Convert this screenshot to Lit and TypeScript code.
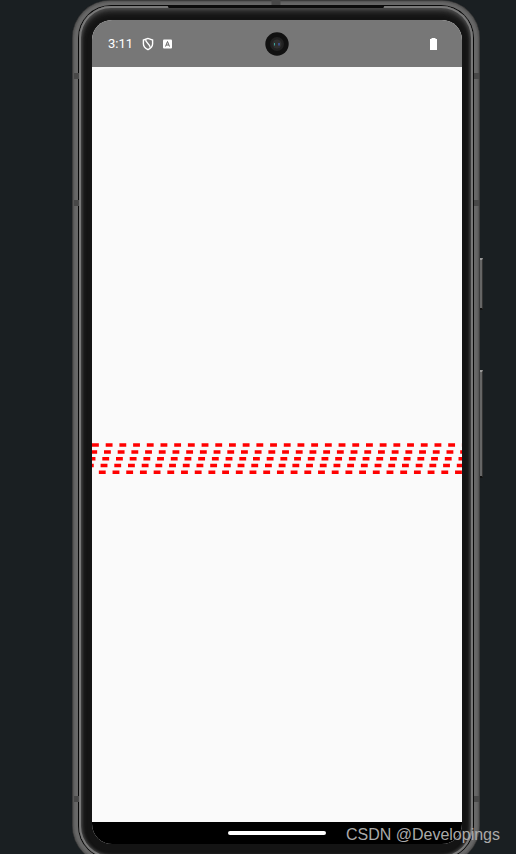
import { LitElement, html, svg, css } from "lit";
import { customElement } from "lit/decorators.js";

const DASH = 6.85;
const ROWS = [
  { y: 2, shift: 0 },
  { y: 9, shift: 1.7 },
  { y: 15.7, shift: 3.4 },
  { y: 22.5, shift: 5.1 },
  { y: 29.2, shift: 6.85 },
];

@customElement("dashed-rows")
class DashedRows extends LitElement {
  static styles = css`
    :host { display: block; }
    svg { display: block; width: 100%; height: 32px; }
    line { stroke: #f00; stroke-width: 3.4; }
  `;
  render() {
    return html`<svg aria-hidden="true">
      ${ROWS.map(r => svg`<line x1="0" x2="100%" y1=${r.y} y2=${r.y}
        stroke-dasharray="${DASH} ${DASH}" stroke-dashoffset=${r.shift} />`)}
    </svg>`;
  }
}

@customElement("status-bar")
class StatusBar extends LitElement {
  static styles = css`
    :host {
      display: flex; align-items: center; position: relative;
      height: 47px; box-sizing: border-box; padding: 0 24px 0 16px;
      background: #777; color: #fff;
      font: 13px/16px Roboto, sans-serif;
    }
    .shield { margin-left: 9px; }
    .letter { margin-left: 9px; }
    .battery { margin-left: auto; }
    svg { display: block; }
    .camera {
      position: absolute; left: 50%; top: 50%;
      transform: translate(-50%, -50%);
    }
  `;
  render() {
    return html`
      <time>3:11</time>
      <svg class="shield" width="12" height="14" viewBox="0 0 12 14" fill="none" stroke="#fff" stroke-width="1.400">
        <path d="M6 1.400 1.400 3v3.800c0 2.700 2 4.700 4.600 5.900 2.600-1.200 4.600-3.200 4.600-5.900V3z" />
        <path d="M3.600 2.600C3.600 6 8 6.500 8.300 10.800" />
      </svg>
      <svg class="letter" width="9" height="10" viewBox="0 0 9 10">
        <rect y="0.500" width="9" height="9" rx="1" fill="#fff" />
        <path d="M2.500 7.500 4.500 2.500 6.500 7.500M3.200 6H5.800" fill="none" stroke="#666" />
      </svg>
      <svg class="camera" width="24" height="24" viewBox="0 0 24 24">
        <circle cx="12" cy="12" r="11.700" fill="#111" />
        <circle cx="12" cy="12" r="7" fill="#222" />
        <circle cx="12" cy="12" r="4.500" fill="#303030" />
        <path d="M9.500 11v2.500" stroke="#38a49a" />
        <path d="M14 11v2.500" stroke="#4058a0" stroke-width="1.500" />
      </svg>
      <svg class="battery" width="9" height="13" viewBox="0 0 9 13">
        <path d="M2.500 1h4v1H8v11H1V2h1.500z" fill="#fff" />
      </svg>`;
  }
}

@customElement("app-root")
class AppRoot extends LitElement {
  static styles = css`
    :host {
      display: flex; box-sizing: border-box; position: relative;
      height: 100vh; overflow: hidden;
      padding: 0 36px 0 72px; background: #1a1f22;
    }
    .phone {
      position: relative; display: flex; flex: 1;
      margin-bottom: -10px; padding: 1px;
      border-radius: 38px; background: #3c3c3c;
    }
    .rim {
      display: flex; flex: 1; padding: 4px 5px;
      border-radius: 37px; background: #686868;
      box-shadow: inset 0 0 2px 1px #505050;
    }
    .seam {
      display: flex; flex: 1; padding: 1px;
      border-radius: 33px; background: #080808;
    }
    .bezel {
      display: flex; flex: 1; padding: 14px 11px 14px 13px;
      border-radius: 32px; background: #141414;
      box-shadow: inset 0 0 0 2px #787878, inset 0 0 3px 3px #4a4a4a, inset 0 4px 6px 1px #484848;
    }
    .screen {
      display: flex; flex: 1; flex-direction: column;
      border-radius: 20px; overflow: hidden; background: #fafafa;
    }
    main { display: flex; flex: 1; flex-direction: column; justify-content: center; }
    dashed-rows { margin-top: 28px; }
    .nav {
      display: flex; align-items: center; justify-content: center;
      height: 22px; background: #000;
    }
    .pill { width: 98px; height: 4px; border-radius: 2px; background: #fff; }
    .mark { position: absolute; width: 5px; height: 6px; background: #484848; }
    .left { left: 2px; }
    .right { right: 1px; }
    .upper { top: 73px; }
    .middle { top: 200px; }
    .lower { top: 796px; }
    .top { top: 0; left: 50%; width: 9px; transform: translateX(-50%); }
    .speaker {
      position: absolute; top: 5px; left: 50%; width: 216px; height: 3px;
      transform: translateX(-50%); border-radius: 2px; background: #0c0c0c;
    }
    .key {
      position: absolute; right: -3px; width: 3px; box-sizing: border-box;
      background: #666; border-top: 2px solid #999; border-bottom: 2px solid #111;
      border-right: 1px solid #333;
    }
    .power { top: 258px; height: 52px; }
    .volume { top: 370px; height: 108px; }
    .watermark {
      position: absolute; right: 16px; bottom: 8px;
      color: #aaa; font: 16px/22px "Liberation Sans", sans-serif;
    }
  `;
  render() {
    return html`
      <div class="phone">
        <div class="rim"><div class="seam"><div class="bezel">
          <div class="screen">
            <status-bar></status-bar>
            <main><dashed-rows></dashed-rows></main>
            <div class="nav"><div class="pill"></div></div>
          </div>
        </div></div></div>
        <span class="mark left upper"></span>
        <span class="mark left middle"></span>
        <span class="mark left lower"></span>
        <span class="mark right upper"></span>
        <span class="mark right middle"></span>
        <span class="mark right lower"></span>
        <span class="mark top"></span>
        <span class="speaker"></span>
        <span class="key power"></span>
        <span class="key volume"></span>
      </div>
      <div class="watermark">CSDN @Developings</div>`;
  }
}
